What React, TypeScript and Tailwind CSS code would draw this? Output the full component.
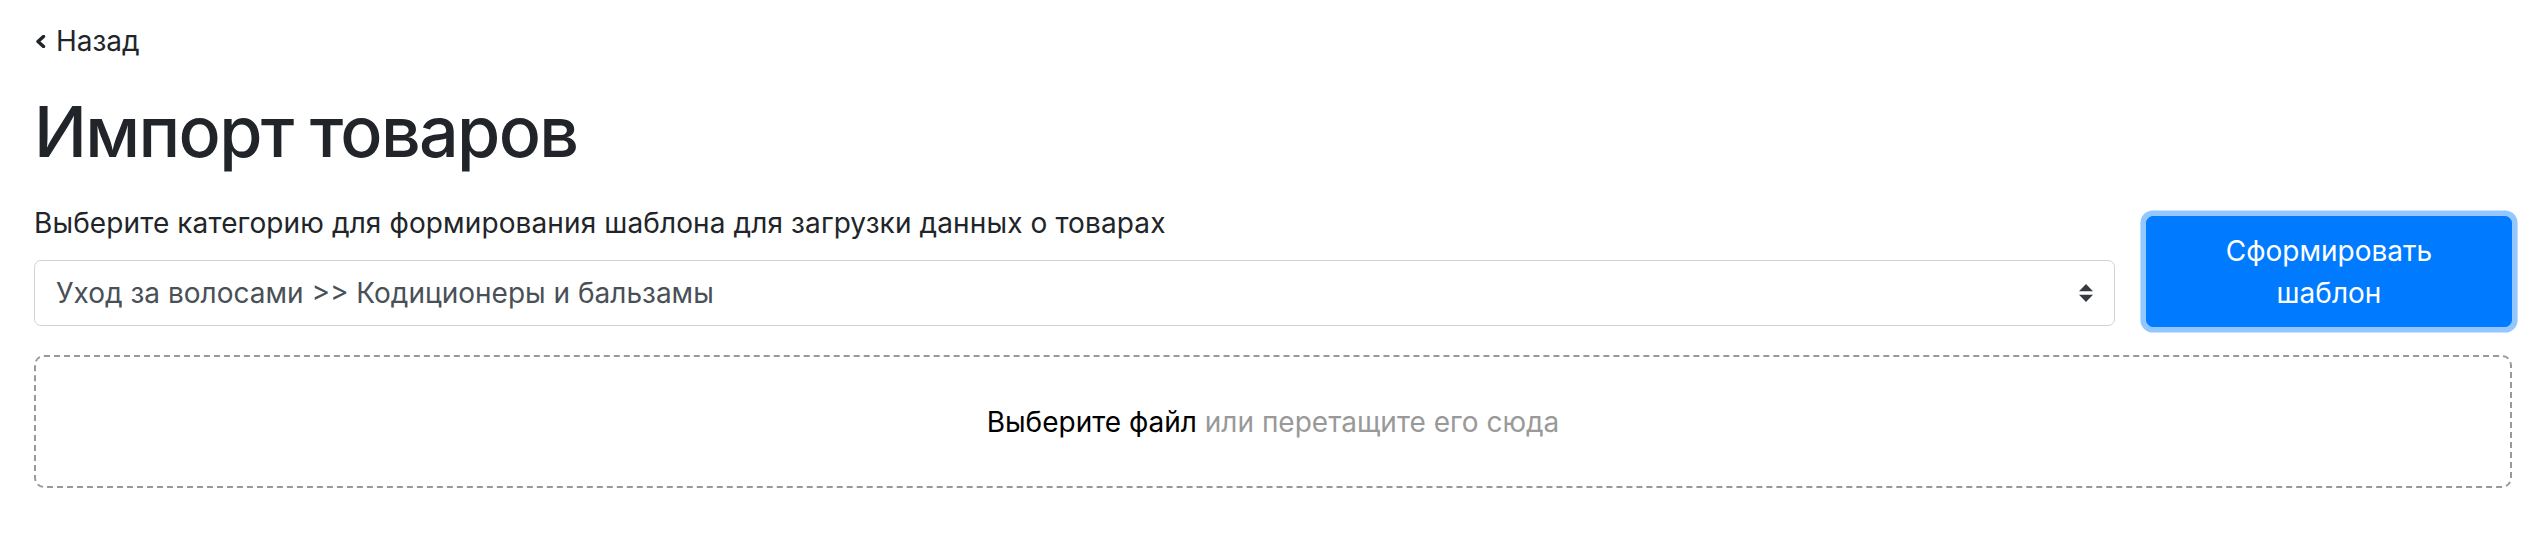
export default function App() {
  return (
    <div className="min-h-[560px] bg-white pl-[34px] pr-[14px] pt-[20px] text-[#212529] font-['Inter','Noto_Sans',sans-serif]">
      <a className="flex h-[42px] items-center text-[28px] leading-[42px] text-[#212529]">
        <svg className="ml-[1px] mr-[10px]" width="11" height="13" viewBox="0 0 11 13">
          <polyline points="8.5,1.5 3,6.5 8.5,11.5" fill="none" stroke="#212529" strokeWidth="3.4" strokeLinecap="round" strokeLinejoin="round" />
        </svg>
        <span>Назад</span>
      </a>
      <h1 className="mt-[28px] text-[70px] font-medium leading-[84px] tracking-[-0.024em] text-[#212529]">Импорт товаров</h1>
      <div className="mt-[28px] flex items-end gap-[31px]">
        <div className="flex flex-1 flex-col">
          <label className="text-[28px] leading-[42px] tracking-[0.004em] text-[#212529]">
            Выберите категорию для формирования шаблона для загрузки данных о товарах
          </label>
          <div className="relative mt-[16px] flex h-[66px] items-center rounded-[7px] border border-[#ced4da] bg-white pl-[21px] text-[28px] leading-[42px] text-[#495057]">
            <span>Уход за волосами &gt;&gt; Кодиционеры и бальзамы</span>
            <svg className="absolute right-[21px] top-1/2 -translate-y-1/2" width="14" height="18" viewBox="0 0 4 5" preserveAspectRatio="none">
              <path d="M2 0L0 2h4zm0 5L0 3h4z" fill="#343a40" />
            </svg>
          </div>
        </div>
        <button className="mb-[-1px] flex h-[111px] w-[366px] items-center justify-center rounded-[7px] border border-[#007bff] bg-[#007bff] text-center text-[28px] leading-[42px] text-white shadow-[0_0_0_5.6px_rgba(38,143,255,0.5)]">
          Сформировать
          <br />
          шаблон
        </button>
      </div>
      <div className="mt-[29px] flex h-[133px] items-center justify-center rounded-[10px] border-2 border-dashed border-[#999999] text-[28px] leading-[42px]">
        <span className="text-black">Выберите файл</span>
        <span className="ml-[0.28em] text-[#999999]">или перетащите его сюда</span>
      </div>
    </div>
  );
}
